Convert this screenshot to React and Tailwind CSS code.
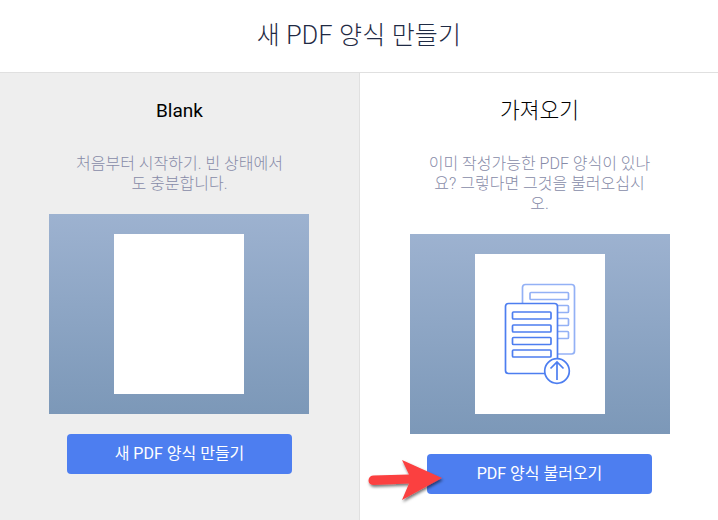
import React from "react";

const font = "font-['Roboto','Noto_Sans_CJK_KR',sans-serif]";

function ImportIcon() {
  const frontRows = [58, 71, 83.5, 96];
  const backRows = [38.5, 51.5, 64.5, 77.5];
  return (
    <svg width="130" height="160" viewBox="0 0 130 160" fill="none">
      <g stroke="#4d7ef0" strokeWidth="1.7" opacity="0.6">
        <rect x="47.5" y="30.5" width="52" height="69.5" rx="3" />
        {backRows.map((y) => (
          <rect key={y} x="55" y={y} width="38.5" height="7" rx="1" />
        ))}
      </g>
      <rect x="30.5" y="49.5" width="52" height="70" rx="3" fill="white" stroke="#4d7ef0" strokeWidth="1.7" />
      {frontRows.map((y) => (
        <rect key={y} x="37.5" y={y} width="38.5" height="7" rx="1" fill="white" stroke="#4d7ef0" strokeWidth="1.7" />
      ))}
      <circle cx="82" cy="117" r="12.3" fill="white" stroke="#4d7ef0" strokeWidth="1.7" />
      <path d="M82 126V108.5M75.5 114.5L82 108L88.5 114.5" stroke="#4d7ef0" strokeWidth="1.7" />
    </svg>
  );
}

function Option({ title, titleClass, lines, button, children, className, imageClass }) {
  return (
    <section className={`flex flex-col items-center ${className}`}>
      <h2 className={`mt-[25px] leading-[26px] text-black ${titleClass}`}>{title}</h2>
      <p className="mt-[30px] w-[223px] text-center text-[16px] leading-[20px] font-light text-[#878ba8]">{lines}</p>
      <div className={`mt-[20px] flex h-[200px] w-[260px] items-center justify-center bg-gradient-to-b from-[#9db2d0] to-[#7c98b8] ${imageClass}`}>
        <div className="h-[160px] w-[130px] bg-white">{children}</div>
      </div>
      <button className="mt-[20px] h-[40px] w-[225px] rounded-[4px] bg-[#4d7ef0] text-[16px] font-normal text-white">
        {button}
      </button>
    </section>
  );
}

export default function App() {
  return (
    <main className={`relative h-[520px] w-[718px] overflow-hidden bg-white ${font}`}>
      <header className="flex h-[73px] items-center justify-center border-b border-[#e0e0e0]">
        <h1 className="text-[25px] font-light tracking-[0.2px] text-[#1f2a44]">새 PDF 양식 만들기</h1>
      </header>
      <div className="flex h-[447px]">
        <Option
          title="Blank"
          titleClass="text-[19px]"
          lines={
            <>
              처음부터 시작하기. 빈 상태에서
              <br />도 충분합니다.
            </>
          }
          button="새 PDF 양식 만들기"
          className="w-[360px] shrink-0 border-r border-[#e0e0e0] bg-[#eeeeee]"
          imageClass="mr-px"
        />
        <Option
          title="가져오기"
          titleClass="text-[21.5px] font-light"
          lines="이미 작성가능한 PDF 양식이 있나요? 그렇다면 그것을 불러오십시오."
          button="PDF 양식 불러오기"
          className="w-[359px] shrink-0"
          imageClass="ml-px"
        >
          <ImportIcon />
        </Option>
      </div>
      {/* red arrow annotation */}
      <svg className="absolute left-[364px] top-[456px]" width="84" height="50" viewBox="0 0 84 50" fill="none">
        <defs>
          <filter id="arrowShadow" x="-20%" y="-20%" width="140%" height="150%">
            <feDropShadow dx="1" dy="2" stdDeviation="1.5" floodColor="#000" floodOpacity="0.55" />
          </filter>
        </defs>
        <path
          d="M9 19.5L45 18.5L38 4L78 22L38 44L45 27.5L9 29C3 29 3 20 9 19.5Z"
          fill="#fb4040"
          filter="url(#arrowShadow)"
        />
      </svg>
    </main>
  );
}
